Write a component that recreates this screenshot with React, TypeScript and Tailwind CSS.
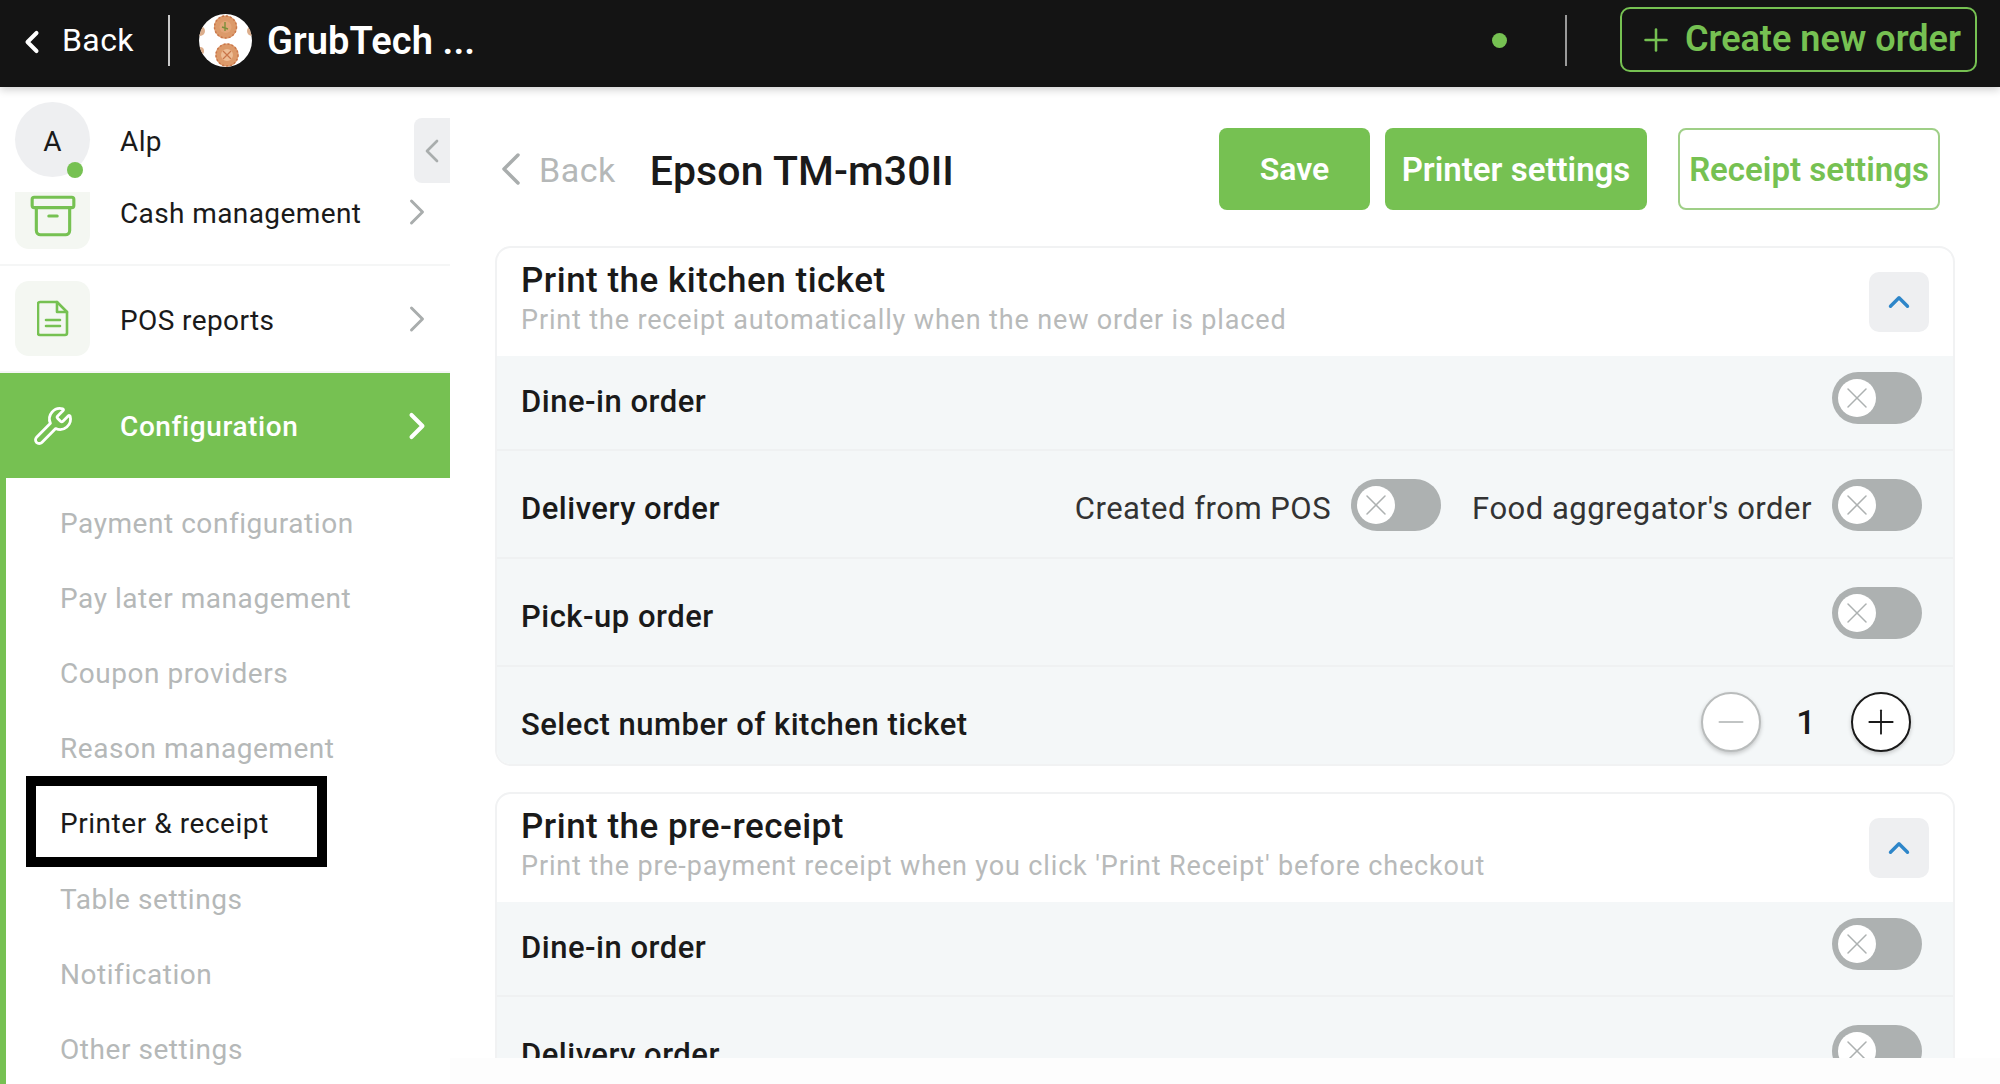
import { Archive, ChevronLeft, ChevronRight, ChevronUp, Minus, Plus, Wrench, X } from 'lucide-react';

const subItems = [
  'Payment configuration',
  'Pay later management',
  'Coupon providers',
  'Reason management',
  'Printer & receipt',
  'Table settings',
  'Notification',
  'Other settings',
];

const Toggle = () => (
  <div className="flex h-[52px] w-[90px] shrink-0 items-center rounded-full bg-[#adb1b1] pl-[6px]">
    <div className="flex h-[38px] w-[38px] items-center justify-center rounded-full bg-white">
      <X size={36} strokeWidth={1} className="shrink-0 text-[#adb1b1]" />
    </div>
  </div>
);

const Logo = () => (
  <svg width="53" height="53" viewBox="0 0 53 53" className="shrink-0">
    <defs>
      <clipPath id="logoClip">
        <circle cx="26.5" cy="26.5" r="26.5" />
      </clipPath>
    </defs>
    <g clipPath="url(#logoClip)">
      <rect width="53" height="53" fill="#fff" />
      <circle cx="26.5" cy="13" r="11.5" fill="#dc9a6a" />
      <circle cx="26.5" cy="13" r="11" fill="none" stroke="#c9764a" strokeWidth="1.5" strokeDasharray="2 2" />
      <circle cx="26.5" cy="13" r="6" fill="#e3a679" />
      <path d="M26 8v9M23 13l6 2" stroke="#7b8f3a" strokeWidth="1.4" />
      <circle cx="28" cy="41" r="11.5" fill="#dc9a6a" />
      <circle cx="28" cy="41" r="11" fill="none" stroke="#c9764a" strokeWidth="1.5" strokeDasharray="2 2" />
      <circle cx="28" cy="41" r="6" fill="#edbd95" />
      <path d="M24 37l8 8M32 37l-8 8" stroke="#c9764a" strokeWidth="1.2" />
      <circle cx="1" cy="17" r="5" fill="#dcae8c" />
      <circle cx="53" cy="17" r="5" fill="#dcae8c" />
      <circle cx="1" cy="37" r="4" fill="#dcae8c" />
    </g>
  </svg>
);

const DocIcon = () => (
  <svg width="32" height="37" viewBox="0 0 32 37" fill="none" stroke="#76c152" strokeWidth="2.6" strokeLinejoin="round" strokeLinecap="round">
    <path d="M3 2h17l10 10v21a2 2 0 0 1-2 2H3a2 2 0 0 1-2-2V4a2 2 0 0 1 2-2z" />
    <path d="M20 2v10h10" />
    <path d="M9 20h14M9 26h14" />
  </svg>
);

const MenuRow = ({ icon, label }: { icon: React.ReactNode; label: string }) => (
  <div className="flex h-[107px] items-center border-b-2 border-[#f5f6f6] pl-[15px] pr-[11px]">
    <div className="flex h-[75px] w-[75px] shrink-0 items-center justify-center rounded-[14px] bg-[#f4f7f2]">{icon}</div>
    <span className="ml-[30px] mt-[4px] text-[28px] tracking-[0.4px] text-[#1a1a1a]">{label}</span>
    <ChevronRight size={44} strokeWidth={1.6} className="ml-auto text-[#a9adad]" />
  </div>
);

const Row = ({ label, first, children }: { label: string; first?: boolean; children?: React.ReactNode }) => (
  <div className={`flex items-center justify-between border-b-2 border-[#eff1f2] bg-[#f4f7f8] pl-[24px] pr-[31px] ${first ? 'pt-[16px] pb-[25px]' : 'pt-[28px] pb-[26px]'}`}>
    <span className="mt-[8px] text-[31px] leading-[36px] font-medium tracking-[0.5px] text-[#1a1a1a]">{label}</span>
    <div className="flex items-center">{children}</div>
  </div>
);

const CardHeader = ({ title, sub }: { title: string; sub: string }) => (
  <div className="flex h-[108px] items-center justify-between pl-[24px] pr-[24px]">
    <div className="mt-[-7px]">
      <h2 className="text-[35px] font-medium leading-[43px] tracking-[0.5px] text-[#1a1a1a]">{title}</h2>
      <p className="text-[27px] leading-[36px] tracking-[0.85px] text-[#b8baba]">{sub}</p>
    </div>
    <div className="flex h-[60px] w-[60px] items-center justify-center rounded-[10px] bg-[#eeeff1]">
      <ChevronUp size={34} strokeWidth={2.4} className="text-[#2e86c9]" />
    </div>
  </div>
);

export default function App() {
  return (
    <div className="flex h-[1084px] w-[2000px] flex-col overflow-hidden bg-white font-[Roboto,sans-serif]">
      <header className="relative z-20 flex h-[87px] shrink-0 items-center bg-[#141414] pr-[23px] pl-[14px] shadow-[0_3px_8px_rgba(0,0,0,0.18)]">
        <ChevronLeft size={36} strokeWidth={2.7} className="mb-[3px] text-white" />
        <span className="mb-[7px] ml-[12px] text-[32px] tracking-[0.4px] text-white">Back</span>
        <div className="mb-[6px] ml-[34px] h-[51px] w-[2px] bg-[#c9c9c9]" />
        <div className="mb-[6px] ml-[29px]">
          <Logo />
        </div>
        <span className="mb-[5px] ml-[15px] text-[38px] font-semibold tracking-[0.1px] text-white">GrubTech ...</span>
        <div className="mb-[6px] ml-auto h-[15px] w-[15px] rounded-full bg-[#76c152]" />
        <div className="mb-[6px] ml-[58px] h-[51px] w-[2px] bg-[#9a9a9a]" />
        <div className="mb-[8px] ml-[53px] flex h-[65px] w-[357px] items-center rounded-[10px] border-2 border-[#76c152] pl-[16px] text-[#76c152]">
          <Plus size={36} strokeWidth={1.7} />
          <span className="mb-[1px] ml-[11px] text-[36px] font-semibold">Create new order</span>
        </div>
      </header>

      <div className="flex min-h-0 flex-1">
        <aside className="relative flex w-[450px] shrink-0 flex-col overflow-hidden">
          <div className="relative z-10 flex h-[105px] shrink-0 items-center bg-white pl-[15px]">
            <div className="relative flex h-[75px] w-[75px] shrink-0 items-center justify-center rounded-full bg-[#eeeff1] pt-[5px] text-[28px] text-[#1a1a1a]">
              A
              <span className="absolute right-[7px] bottom-[-1px] h-[16px] w-[16px] rounded-full bg-[#76c152]" />
            </div>
            <span className="ml-[30px] mt-[5px] text-[28px] tracking-[0.4px] text-[#1a1a1a]">Alp</span>
            <div className="absolute top-[31px] right-0 flex h-[65px] w-[36px] items-center justify-center rounded-l-[8px] bg-[#eeeff1]">
              <ChevronLeft size={40} strokeWidth={1.6} className="shrink-0 text-[#a9adad]" />
            </div>
          </div>

          <div className="mt-[-33px] flex flex-col">
            <MenuRow icon={<Archive size={50} strokeWidth={1.5} className="mt-[8px] text-[#76c152]" />} label="Cash management" />
            <MenuRow icon={<DocIcon />} label="POS reports" />
            <div className="flex h-[105px] items-center bg-[#76c152] pl-[32px] pr-[11px] text-white">
              <Wrench size={42} strokeWidth={1.6} className="shrink-0" />
              <span className="ml-[46px] mt-[3px] text-[28px] font-medium tracking-[0.6px]">Configuration</span>
              <ChevronRight size={44} strokeWidth={2.2} className="ml-auto" />
            </div>
            <div className="relative border-l-[6px] border-[#76c152] pl-[54px] pt-[8px]">
              {subItems.map((item) => (
                <div key={item} className={`flex h-[75.2px] items-center text-[28px] tracking-[0.55px] ${item === 'Printer & receipt' ? 'text-[#1a1a1a]' : 'text-[#b5b8b8]'}`}>
                  {item}
                </div>
              ))}
              <div className="absolute top-[298px] left-[20px] h-[91px] w-[301px] border-[10px] border-black" />
            </div>
          </div>
        </aside>

        <main className="flex min-w-0 flex-1 flex-col">
          <div className="min-h-0 flex-1 overflow-hidden pt-[41px] pr-[45px] pl-[45px]">
            <div className="flex h-[82px] items-center pr-[15px]">
              <ChevronLeft size={56} strokeWidth={1.5} className="ml-[-12px] shrink-0 text-[#a9adad]" />
              <span className="mt-[3px] text-[34px] tracking-[0.5px] text-[#b5b8b8]">Back</span>
              <h1 className="ml-[34px] mt-[5px] text-[41px] font-medium tracking-[0.1px] text-[#1a1a1a]">Epson TM-m30II</h1>
              <div className="ml-auto flex items-center">
                <div className="flex h-[82px] w-[151px] items-center justify-center rounded-[8px] bg-[#76c152] text-[32px] font-semibold text-white">Save</div>
                <div className="ml-[15px] flex h-[82px] w-[262px] items-center justify-center rounded-[8px] bg-[#76c152] pt-[2px] text-[33px] font-semibold text-white">Printer settings</div>
                <div className="ml-[31px] flex h-[82px] w-[262px] items-center justify-center rounded-[8px] border-2 border-[#9fcf87] pt-[2px] text-[33px] font-semibold text-[#76c152]">Receipt settings</div>
              </div>
            </div>

            <section className="mt-[36px] overflow-hidden rounded-[16px] border-2 border-[#f1f2f3]">
              <CardHeader title="Print the kitchen ticket" sub="Print the receipt automatically when the new order is placed" />
              <Row label="Dine-in order" first>
                <Toggle />
              </Row>
              <Row label="Delivery order">
                <span className="mt-[7px] text-[31px] leading-[36px] tracking-[0.5px] text-[#333]">Created from POS</span>
                <div className="ml-[20px]">
                  <Toggle />
                </div>
                <span className="ml-[31px] mt-[7px] text-[31px] leading-[36px] tracking-[0.5px] text-[#333]">Food aggregator's order</span>
                <div className="ml-[20px]">
                  <Toggle />
                </div>
              </Row>
              <Row label="Pick-up order">
                <Toggle />
              </Row>
              <div className="flex h-[97px] items-center justify-between bg-[#f4f7f8] pt-[13px] pr-[42px] pl-[24px]">
                <span className="mt-[6px] text-[31px] leading-[36px] font-medium tracking-[0.5px] text-[#1a1a1a]">Select number of kitchen ticket</span>
                <div className="flex items-center">
                  <div className="flex h-[60px] w-[60px] items-center justify-center rounded-full border-2 border-[#b9bcbc] bg-white shadow-[0_2px_4px_rgba(0,0,0,0.2)]">
                    <Minus size={40} strokeWidth={1} className="text-[#adb1b1]" />
                  </div>
                  <span className="w-[90px] text-center text-[34px] font-medium text-[#1a1a1a]">1</span>
                  <div className="flex h-[60px] w-[60px] items-center justify-center rounded-full border-2 border-[#1a1a1a] bg-white shadow-[0_2px_4px_rgba(0,0,0,0.2)]">
                    <Plus size={40} strokeWidth={1.1} className="text-[#1a1a1a]" />
                  </div>
                </div>
              </div>
            </section>

            <section className="mt-[26px] overflow-hidden rounded-[16px] border-2 border-[#f1f2f3]">
              <CardHeader title="Print the pre-receipt" sub="Print the pre-payment receipt when you click 'Print Receipt' before checkout" />
              <Row label="Dine-in order" first>
                <Toggle />
              </Row>
              <Row label="Delivery order">
                <Toggle />
              </Row>
            </section>
          </div>
          <div className="relative z-10 h-[26px] shrink-0 bg-[#fdfdfd]" />
        </main>
      </div>
    </div>
  );
}
